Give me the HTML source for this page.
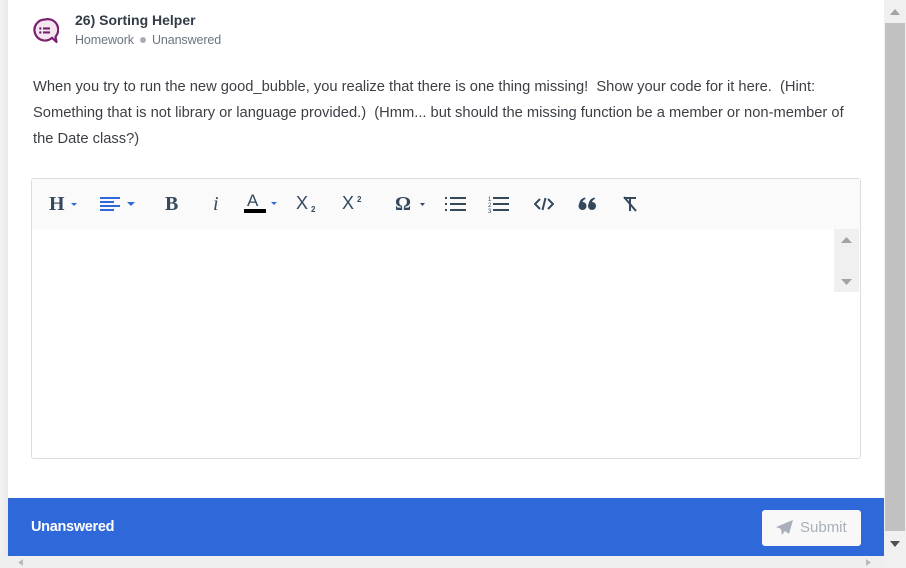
<!DOCTYPE html>
<html><head><meta charset="utf-8"><style>
*{margin:0;padding:0;box-sizing:border-box}
body{width:906px;height:568px;overflow:hidden;background:#fff;font-family:"Liberation Sans",sans-serif;position:relative}
.lstrip{position:absolute;left:0;top:0;width:8px;height:556px;background:linear-gradient(to right,#f2f2f2,#e9e9e9)}
.title{position:absolute;left:75px;top:12px;font-size:14px;font-weight:bold;color:#333c47;letter-spacing:0}
.sub{position:absolute;left:75px;top:33px;font-size:12.5px;color:#6b7480;letter-spacing:-0.1px}
.sub .dot{display:inline-block;width:6px;height:6px;border-radius:50%;background:#a9aeb4;margin:0 6px 2px 6px;vertical-align:middle}
.q{position:absolute;left:33px;top:74px;font-size:14.7px;line-height:26px;color:#3b3f45;white-space:nowrap;letter-spacing:0}
.ed{position:absolute;left:31px;top:178px;width:830px;height:281px;border:1px solid #dcdcdc;border-radius:3px}
.tb{position:absolute;left:0;top:0;width:828px;height:50px;background:#fafafa}
.tb span{position:absolute;top:14px;color:#34495e;font-size:20px;font-family:"Liberation Serif",serif;font-weight:bold}
.isb{position:absolute;left:802px;top:50px;width:25px;height:63px;background:#f0f0f0}
.vsb{position:absolute;left:884px;top:0;width:22px;height:568px;background:#f0f0f0}
.thumb{position:absolute;left:885px;top:23px;width:20px;height:508px;background:#c1c1c1}
.bar{position:absolute;left:8px;top:498px;width:876px;height:58px;background:#2f69d9}
.bar .u{position:absolute;left:23px;top:21px;color:#fff;font-size:14.5px;font-weight:bold;letter-spacing:-0.3px}
.btn{position:absolute;left:754px;top:12px;width:99px;height:36px;background:#f8f8f8;border-radius:3px;color:#a9b0b9;font-size:15px}
.hsb{position:absolute;left:0;top:556px;width:884px;height:12px;background:#efefef}
</style></head><body>
<div class="lstrip"></div>
<svg style="position:absolute;left:31px;top:17px" width="28" height="28" viewBox="0 0 28 28"><path d="M14 2.5a10.5 10.5 0 1 0 7 18.3l4.5 4.2-1-5.3A10.5 10.5 0 0 0 14 2.5z" fill="#f3e6f0" stroke="#7a1f6e" stroke-width="2.2" stroke-linejoin="round"/><circle cx="9.3" cy="11.5" r="1.2" fill="#7a1f6e"/><circle cx="9.3" cy="15.5" r="1.2" fill="#7a1f6e"/><rect x="12" y="10.4" width="7" height="2.1" fill="#7a1f6e"/><rect x="12" y="14.4" width="7" height="2.1" fill="#7a1f6e"/></svg>
<div class="title">26) Sorting Helper</div>
<div class="sub">Homework<span class="dot"></span>Unanswered</div>
<div class="q">When you try to run the new good_bubble, you realize that there is one thing missing!&nbsp; Show your code for it here.&nbsp; (Hint:<br>Something that is not library or language provided.)&nbsp; (Hmm... but should the missing function be a member or non-member of<br>the Date class?)</div>
<div class="ed"><div class="tb">
<span style="left:17px">H</span><svg style="position:absolute;left:39px;top:24px" width="7" height="4"><path d="M0 0h6l-3 3z" fill="#2f69d9"/></svg>
<svg style="position:absolute;left:68px;top:18px" width="36" height="14"><rect x="0" y="0" width="20" height="2" fill="#2f69d9"/><rect x="0" y="4" width="14" height="2" fill="#2f69d9"/><rect x="0" y="8" width="20" height="2" fill="#2f69d9"/><rect x="0" y="12" width="14" height="2" fill="#2f69d9"/><path d="M27 5h8l-4 4z" fill="#2f69d9"/></svg>
<span style="left:133px">B</span>
<span style="left:181px;font-style:italic;font-weight:normal">i</span>
<span style="left:215px;font-family:'Liberation Sans',sans-serif;font-weight:normal;font-size:17px;top:12px">A</span><div style="position:absolute;left:212px;top:30px;width:22px;height:4px;background:#000"></div><svg style="position:absolute;left:239px;top:23px" width="7" height="4"><path d="M0 0h6l-3 3z" fill="#2f69d9"/></svg>
<span style="left:264px;font-family:'Liberation Sans',sans-serif;font-weight:normal;font-size:18px">X</span><span style="left:279px;top:26px;font-size:8px;font-family:'Liberation Sans',sans-serif">2</span>
<span style="left:310px;font-family:'Liberation Sans',sans-serif;font-weight:normal;font-size:18px">X</span><span style="left:325px;top:16px;font-size:8px;font-family:'Liberation Sans',sans-serif">2</span>
<span style="left:363px">Ω</span><svg style="position:absolute;left:388px;top:24px" width="6" height="4"><path d="M0 0h5l-2.5 3z" fill="#34495e"/></svg>
<svg style="position:absolute;left:413px;top:17px" width="22" height="16"><g fill="#34495e"><rect x="0" y="1" width="2" height="2"/><rect x="0" y="7" width="2" height="2"/><rect x="0" y="13" width="2" height="2"/><rect x="5" y="1" width="16" height="2"/><rect x="5" y="7" width="16" height="2"/><rect x="5" y="13" width="16" height="2"/></g></svg>
<svg style="position:absolute;left:456px;top:16px" width="22" height="18"><g fill="#34495e"><text x="0" y="6" font-size="6" font-family="Liberation Sans">1</text><text x="0" y="12" font-size="6" font-family="Liberation Sans">2</text><text x="0" y="18" font-size="6" font-family="Liberation Sans">3</text><rect x="5" y="2" width="16" height="2"/><rect x="5" y="8" width="16" height="2"/><rect x="5" y="14" width="16" height="2"/></g></svg>
<svg style="position:absolute;left:502px;top:17px" width="20" height="16"><path d="M6 3L1 8l5 5M14 3l5 5-5 5M11.5 2l-3 12" stroke="#34495e" stroke-width="2" fill="none"/></svg>
<svg style="position:absolute;left:546px;top:18px" width="20" height="14"><g fill="#34495e"><circle cx="4.5" cy="9" r="4"/><path d="M1 9C1 4 3 1.5 7 0.5l.6 1.5C5 3 4 5 4.5 7z"/><circle cx="14" cy="9" r="4"/><path d="M10.5 9c0-5 2-7.5 6-8.5l.6 1.5C14.5 3 13.5 5 14 7z"/></g></svg>
<svg style="position:absolute;left:590px;top:17px" width="16" height="16"><path d="M2 2h12M8 2v13M2 1l12 14" stroke="#34495e" stroke-width="2" fill="none"/></svg>
</div>
<div class="isb"><svg style="position:absolute;left:7px;top:8px" width="12" height="48"><path d="M0 6l5.5-6 5.5 6z M0 42l5.5 6 5.5-6z" fill="#a3a3a3"/></svg></div>
</div>
<div class="bar"><div class="u">Unanswered</div>
<div class="btn"><svg style="position:absolute;left:14px;top:10px" width="18" height="16"><path d="M17 0L0 7l5 2 1 6 3-4 4 3z" fill="#a9b0b9"/></svg><span style="position:absolute;left:38px;top:9px">Submit</span></div></div>
<div class="hsb"><svg style="position:absolute;left:18px;top:3px" width="6" height="8"><path d="M5 0v7l-5-3.5z" fill="#bbb"/></svg><svg style="position:absolute;left:866px;top:3px" width="6" height="8"><path d="M0 0v7l5-3.5z" fill="#bbb"/></svg></div>
<div class="vsb"></div><div class="thumb"></div>
<svg style="position:absolute;left:890px;top:9px" width="10" height="6"><path d="M0 6l5-6 5 6z" fill="#a3a3a3"/></svg>
<svg style="position:absolute;left:890px;top:541px" width="10" height="6"><path d="M0 0l5 6 5-6z" fill="#505050"/></svg>
</body></html>
